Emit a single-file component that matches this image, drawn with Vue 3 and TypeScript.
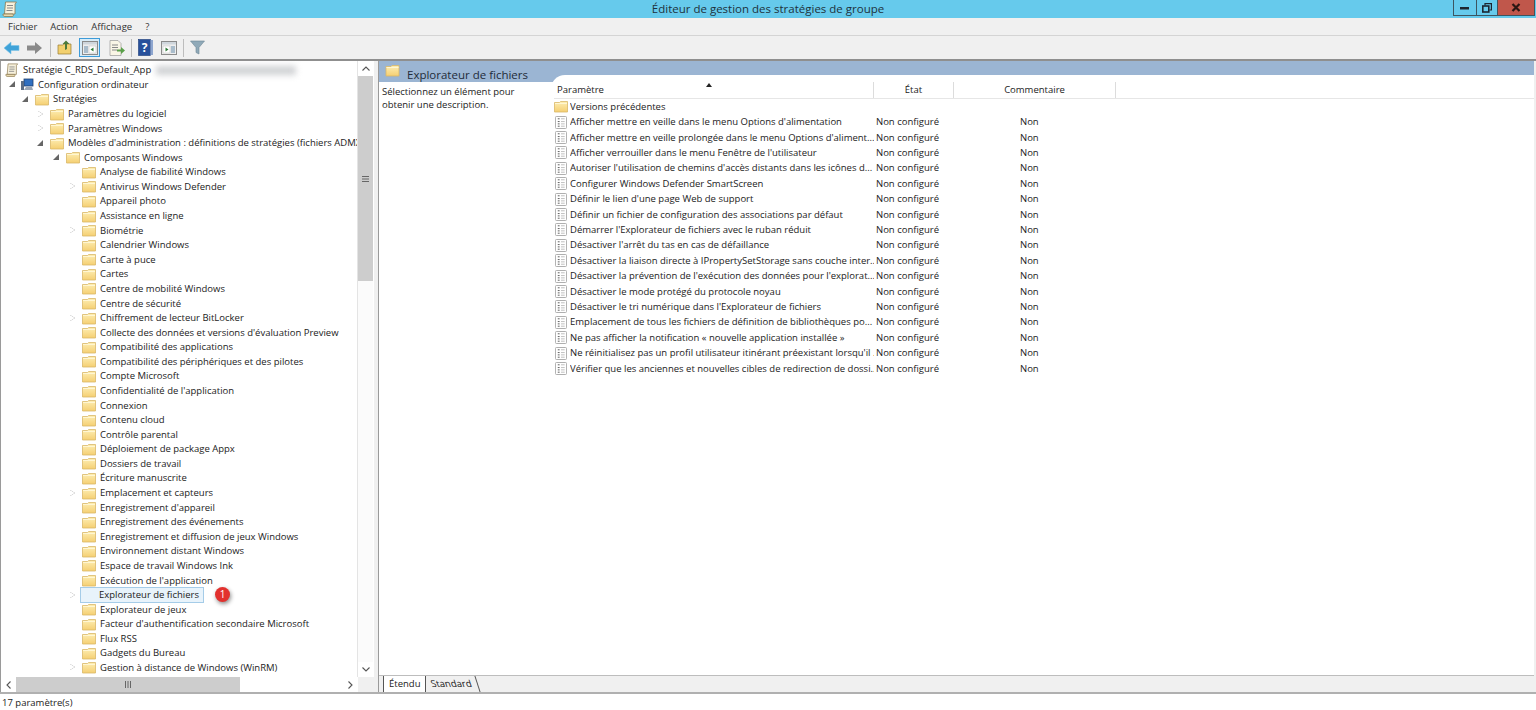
<script setup lang="ts">
interface TreeRow {
  label: string;
  level: number;
  icon: 'folder' | 'scroll' | 'computer';
  arrow?: 'open' | 'closed';
  selected?: boolean;
  blurred?: boolean;
}

// Composants Windows : niveau 5, tous des dossiers
const folder = (label: string, arrow?: 'closed'): TreeRow => ({label, level: 5, icon: 'folder', arrow});

const tree: TreeRow[] = [
  {label: 'Stratégie C_RDS_Default_App', level: 0, icon: 'scroll', blurred: true},
  {label: 'Configuration ordinateur', level: 1, icon: 'computer', arrow: 'open'},
  {label: 'Stratégies', level: 2, icon: 'folder', arrow: 'open'},
  {label: 'Paramètres du logiciel', level: 3, icon: 'folder', arrow: 'closed'},
  {label: 'Paramètres Windows', level: 3, icon: 'folder', arrow: 'closed'},
  {label: "Modèles d'administration : définitions de stratégies (fichiers ADMX)", level: 3, icon: 'folder', arrow: 'open'},
  {label: 'Composants Windows', level: 4, icon: 'folder', arrow: 'open'},
  folder('Analyse de fiabilité Windows'),
  folder('Antivirus Windows Defender', 'closed'),
  folder('Appareil photo'),
  folder('Assistance en ligne'),
  folder('Biométrie', 'closed'),
  folder('Calendrier Windows'),
  folder('Carte à puce'),
  folder('Cartes'),
  folder('Centre de mobilité Windows'),
  folder('Centre de sécurité'),
  folder('Chiffrement de lecteur BitLocker', 'closed'),
  folder("Collecte des données et versions d'évaluation Preview"),
  folder('Compatibilité des applications'),
  folder('Compatibilité des périphériques et des pilotes'),
  folder('Compte Microsoft'),
  folder("Confidentialité de l'application"),
  folder('Connexion'),
  folder('Contenu cloud'),
  folder('Contrôle parental'),
  folder('Déploiement de package Appx'),
  folder('Dossiers de travail'),
  folder('Écriture manuscrite'),
  folder('Emplacement et capteurs', 'closed'),
  folder("Enregistrement d'appareil"),
  folder('Enregistrement des événements'),
  folder('Enregistrement et diffusion de jeux Windows'),
  folder('Environnement distant Windows'),
  folder('Espace de travail Windows Ink'),
  folder("Exécution de l'application"),
  {label: 'Explorateur de fichiers', level: 5, icon: 'folder', arrow: 'closed', selected: true},
  folder('Explorateur de jeux'),
  folder("Facteur d'authentification secondaire Microsoft"),
  folder('Flux RSS'),
  folder('Gadgets du Bureau'),
  folder('Gestion à distance de Windows (WinRM)', 'closed'),
];

const settings = [
  "Afficher mettre en veille dans le menu Options d'alimentation",
  "Afficher mettre en veille prolongée dans le menu Options d'aliment...",
  "Afficher verrouiller dans le menu Fenêtre de l'utilisateur",
  "Autoriser l'utilisation de chemins d'accès distants dans les icônes d...",
  'Configurer Windows Defender SmartScreen',
  "Définir le lien d'une page Web de support",
  'Définir un fichier de configuration des associations par défaut',
  "Démarrer l'Explorateur de fichiers avec le ruban réduit",
  "Désactiver l'arrêt du tas en cas de défaillance",
  'Désactiver la liaison directe à IPropertySetStorage sans couche inter...',
  "Désactiver la prévention de l'exécution des données pour l'explorat...",
  'Désactiver le mode protégé du protocole noyau',
  "Désactiver le tri numérique dans l'Explorateur de fichiers",
  'Emplacement de tous les fichiers de définition de bibliothèques po...',
  'Ne pas afficher la notification « nouvelle application installée »',
  'Ne réinitialisez pas un profil utilisateur itinérant préexistant lorsqu\'il ...',
  'Vérifier que les anciennes et nouvelles cibles de redirection de dossi...',
];
</script>

<template>
  <div class="app">
    <svg class="defs" width="0" height="0">
      <defs>
        <linearGradient id="fold" x1="0" y1="0" x2="0" y2="1">
          <stop offset="0" stop-color="#fdeeb4"/>
          <stop offset="1" stop-color="#f5cf72"/>
        </linearGradient>
      </defs>
      <symbol id="i-folder" viewBox="0 0 14 13">
        <path d="M.5 2.5V12h13V1.5H6.5L5.5 2.5z" fill="url(#fold)" stroke="#d9b768" stroke-width=".8"/>
        <path d="M1 3.5h12" stroke="#fff6d2" stroke-width="1"/>
      </symbol>
      <symbol id="i-setting" viewBox="0 0 13 14">
        <rect x=".5" y=".5" width="12" height="13" rx="1" fill="#fff" stroke="#a8a8a8"/>
        <path d="M3 3h2M3 6h2M3 8.500h2M3 11h2" stroke="#555" stroke-width="1"/>
        <path d="M6.500 3h4M6.500 6h4M6.500 8.500h4M6.500 11h4" stroke="#bbb" stroke-width="1"/>
      </symbol>
      <symbol id="i-scroll" viewBox="0 0 16 16">
        <path d="M3.500 1h11l-1.500 2v10H2.500z" fill="#f7f1dc" stroke="#8c7a50" stroke-width=".8"/>
        <path d="M1 13h10c.6 1 .4 2-.2 2.500H2.500C1.500 15.500.8 14 1 13z" fill="#e8d9ae" stroke="#8c7a50" stroke-width=".8"/>
        <path d="M5 4.500h6M5 7h6M4.500 9.500h6" stroke="#8a8a8a"/>
      </symbol>
    </svg>

    <header class="titlebar">
      <svg class="titlebar__icon" width="16" height="16"><use href="#i-scroll"/></svg>
      <span class="titlebar__text">Éditeur de gestion des stratégies de groupe</span>
      <div class="winbtns">
        <div class="winbtn winbtn--min">
          <svg width="10" height="4" viewBox="0 0 10 4"><rect y="1" width="9" height="2.500" fill="#1c2530"/></svg>
        </div>
        <div class="winbtn winbtn--max">
          <svg width="10" height="10" viewBox="0 0 10 10">
            <path d="M3 2.500V.6h6.400v6.400H7.500" fill="none" stroke="#1c2530" stroke-width="1.200"/>
            <rect x=".8" y="3" width="6" height="6" fill="none" stroke="#1c2530" stroke-width="1.600"/>
          </svg>
        </div>
        <div class="winbtn winbtn--close">
          <svg width="10" height="9" viewBox="0 0 10 9"><path d="M1.500 1l7 7M8.500 1l-7 7" stroke="#2a1613" stroke-width="2.200"/></svg>
        </div>
      </div>
    </header>

    <nav class="menubar">
      <span>Fichier</span>
      <span>Action</span>
      <span>Affichage</span>
      <span>?</span>
    </nav>

    <div class="toolbar">
      <svg class="tool" width="18" height="14" viewBox="0 0 18 14"><path d="M1 7l7-6v3.500h8v5H8V13z" fill="#3fa2d8" stroke="#7cc4e8" stroke-width=".6"/></svg>
      <svg class="tool" width="18" height="14" viewBox="0 0 18 14"><path d="M17 7l-7-6v3.500H2v5h8V13z" fill="#8a8a8a"/></svg>
      <i class="sep"></i>
      <svg class="tool" width="16" height="16" viewBox="0 0 16 16">
        <path d="M1 5h5l1-1h7v10H1z" fill="#f2d06f" stroke="#9a7d33" stroke-width=".7"/>
        <path d="M8 10V4H5.500L9 .5 12.500 4H10v5z" fill="#4c7a3a"/>
      </svg>
      <div class="tool-active">
        <svg width="16" height="14" viewBox="0 0 16 14">
          <rect x=".5" y=".5" width="15" height="13" fill="#eee" stroke="#8b8b8b"/>
          <rect x="1" y="1" width="14" height="2.500" fill="#cfd6dc"/>
          <rect x="2" y="5" width="4" height="7" fill="#a9bccb"/>
          <rect x="7" y="5" width="7" height="7" fill="#fff" stroke="#bbb" stroke-width=".5"/>
          <path d="M11.500 6.500l-3 2 3 2z" fill="#2d7a36"/>
        </svg>
      </div>
      <svg class="tool tool--doc" width="18" height="16" viewBox="0 0 18 16">
        <path d="M2 .5h8l3 3v12H2z" fill="#faf6e6" stroke="#999" stroke-width=".7"/>
        <path d="M4 5h6M4 7.500h6M4 10h5" stroke="#888"/>
        <path d="M9 9.500h4V7l4 3.500-4 3.500v-2.500H9z" fill="#5aa04a"/>
      </svg>
      <i class="sep"></i>
      <svg class="tool" width="16" height="17" viewBox="0 0 16 17">
        <rect x=".5" y=".5" width="12" height="16" fill="#27509b" stroke="#1a3a78" stroke-width=".6"/>
        <rect x="12.500" y="1" width="2.500" height="15" fill="#8ea6cf"/>
        <text x="6.500" y="13" class="help-mark">?</text>
      </svg>
      <svg class="tool tool--pane" width="16" height="14" viewBox="0 0 16 14">
        <rect x=".5" y=".5" width="15" height="13" fill="#eee" stroke="#8b8b8b"/>
        <rect x="1" y="1" width="14" height="2.500" fill="#cfd6dc"/>
        <rect x="2" y="5" width="7" height="7" fill="#fff" stroke="#bbb" stroke-width=".5"/>
        <rect x="10" y="5" width="4" height="7" fill="#a9bccb"/>
        <path d="M4.500 6.500l3 2-3 2z" fill="#2d7a36"/>
      </svg>
      <i class="sep"></i>
      <svg class="tool" width="15" height="15" viewBox="0 0 15 15">
        <path d="M.5 1h14L9 7.500V14l-3-1.500v-5z" fill="#8fa9b8" stroke="#6d8796" stroke-width=".6"/>
      </svg>
    </div>

    <main class="panes">
      <section class="left">
        <div class="left__top">
          <div class="tree">
            <div v-for="row in tree" :key="row.label" class="tree__row" :class="'lvl-' + row.level">
              <span class="tree__arrow" :class="row.arrow ? 'tree__arrow--' + row.arrow : ''"></span>
              <svg v-if="row.icon === 'folder'" class="tree__icon" width="14" height="13"><use href="#i-folder"/></svg>
              <svg v-else-if="row.icon === 'scroll'" class="tree__icon" width="14" height="14"><use href="#i-scroll"/></svg>
              <svg v-else class="tree__icon" width="14" height="13" viewBox="0 0 14 13">
                <rect x="4" y="1" width="9" height="7" fill="#2f6fc0" stroke="#20406e" stroke-width=".8"/>
                <path d="M1 3h3v9H1z" fill="#5c6d84"/>
                <path d="M4 12l2-3h6l1 3z" fill="#9aa6b5"/>
              </svg>
              <span class="tree__label" :class="{'tree__label--sel': row.selected}">{{ row.label }}</span>
              <span v-if="row.blurred" class="tree__blur"></span>
              <span v-if="row.selected" class="badge">1</span>
            </div>
          </div>
          <div class="vscroll">
            <div class="sbtn">
              <svg width="8" height="5" viewBox="0 0 8 5"><path d="M.5 4.500L4 1l3.500 3.500" fill="none" stroke="#555" stroke-width="1.100"/></svg>
            </div>
            <div class="vscroll__thumb">
              <svg width="7" height="6" viewBox="0 0 7 6"><path d="M0 .5h7M0 3h7M0 5.500h7" stroke="#666"/></svg>
            </div>
            <div class="vscroll__track"></div>
            <div class="sbtn">
              <svg width="8" height="5" viewBox="0 0 8 5"><path d="M.5.500L4 4 7.500.500" fill="none" stroke="#555" stroke-width="1.100"/></svg>
            </div>
          </div>
        </div>
        <div class="hscroll">
          <div class="sbtn sbtn--h">
            <svg width="5" height="8" viewBox="0 0 5 8"><path d="M4.500.500L1 4l3.500 3.500" fill="none" stroke="#555" stroke-width="1.100"/></svg>
          </div>
          <div class="hscroll__thumb">
            <svg width="6" height="7" viewBox="0 0 6 7"><path d="M.5 0v7M3 0v7M5.500 0v7" stroke="#666"/></svg>
          </div>
          <div class="hscroll__track"></div>
          <div class="sbtn sbtn--h">
            <svg width="5" height="8" viewBox="0 0 5 8"><path d="M.5.500L4 4 .5 7.500" fill="none" stroke="#555" stroke-width="1.100"/></svg>
          </div>
          <div class="hscroll__corner"></div>
        </div>
      </section>

      <div class="splitter"></div>

      <section class="right">
        <div class="right__frame">
          <div class="band">
            <svg class="band__icon" width="15" height="13"><use href="#i-folder"/></svg>
            <span class="band__title">Explorateur de fichiers</span>
          </div>
          <div class="content">
            <p class="descr">Sélectionnez un élément pour obtenir une description.</p>
            <div class="list">
              <div class="list__head">
                <div class="col col--name">Paramètre<i class="sort"></i></div>
                <div class="col col--state">État</div>
                <div class="col col--comment">Commentaire</div>
              </div>
              <div class="list__row">
                <svg class="list__icon list__icon--folder" width="14" height="13"><use href="#i-folder"/></svg>
                <span class="cell-name">Versions précédentes</span>
              </div>
              <div v-for="s in settings" :key="s" class="list__row">
                <svg class="list__icon" width="12" height="13"><use href="#i-setting"/></svg>
                <span class="cell-name">{{ s }}</span>
                <span class="cell-state">Non configuré</span>
                <span class="cell-comment">Non</span>
              </div>
            </div>
          </div>
        </div>
        <div class="tabs">
          <span class="tab tab--on">Étendu</span>
          <span class="tab">Standard</span>
        </div>
      </section>
    </main>

    <footer class="status">17 paramètre(s)</footer>
  </div>
</template>

<style scoped>
.app {
  width: 1536px;
  height: 710px;
  display: flex;
  flex-direction: column;
  overflow: hidden;
  background: #f0f0f0;
  color: #222;
  font-family: "Open Sans", "Noto Sans", sans-serif;
  font-size: 9.5px;
  line-height: 14px;
}

.defs {
  position: absolute;
}

.titlebar {
  height: 18px;
  flex: none;
  display: flex;
  align-items: flex-start;
  position: relative;
  background: #66caec;
}

.titlebar__icon {
  margin: 1px 0 0 2px;
}

.titlebar__text {
  position: absolute;
  left: 0;
  right: 0;
  top: 2px;
  text-align: center;
  font-size: 11.5px;
  color: #20323c;
}

.winbtns {
  margin-left: auto;
  margin-right: 1px;
  display: flex;
  height: 16px;
  position: relative;
}

.winbtn {
  height: 16px;
  display: flex;
  align-items: center;
  justify-content: center;
  box-sizing: border-box;
  border-bottom: 1px solid #3d5560;
  border-right: 1px solid #3d5560;
}

.winbtn--min {
  width: 24px;
  border-left: 1px solid #3d5560;
}

.winbtn--max {
  width: 21px;
}

.winbtn--close {
  width: 37px;
  background: #c0574b;
}

.menubar {
  height: 18px;
  flex: none;
  display: flex;
  align-items: center;
  gap: 13px;
  padding-left: 8px;
  box-sizing: border-box;
  border-bottom: 1px solid #d4d4d4;
  font-size: 9.5px;
  color: #333;
}

.toolbar {
  height: 25px;
  flex: none;
  display: flex;
  align-items: center;
  padding-left: 3px;
  box-sizing: border-box;
  border-bottom: 2px solid #8f8f8f;
}

.tool {
  margin-right: 4px;
  flex: none;
}

.tool--doc {
  margin-left: 8px;
  margin-right: 2px;
}

.tool--pane {
  margin-left: 3px;
  margin-right: 3px;
}

.help-mark {
  fill: #fff;
  font-size: 12px;
  font-weight: 700;
  text-anchor: middle;
}

.tool-active {
  width: 19px;
  height: 17px;
  flex: none;
  display: flex;
  align-items: center;
  justify-content: center;
  margin-left: 2px;
  background: #d8ecf8;
  border: 1px solid #3d9bd8;
}

.sep {
  width: 1px;
  height: 18px;
  flex: none;
  margin: 0 6px 0 3px;
  background: #bdbdbd;
}

.panes {
  flex: 1;
  display: flex;
  min-height: 0;
}

.left {
  width: 374px;
  flex: none;
  display: flex;
  flex-direction: column;
  box-sizing: border-box;
  border-left: 1px solid #9a9a9a;
  background: #fff;
}

.left__top {
  flex: 1;
  display: flex;
  min-height: 0;
}

.tree {
  flex: 1;
  padding-top: 2px;
  overflow: hidden;
}

.tree__row {
  height: 14.585px;
  display: flex;
  align-items: center;
  position: relative;
  white-space: nowrap;
}

.lvl-0 { padding-left: 4px; }
.lvl-1 { padding-left: 4px; }
.lvl-2 { padding-left: 19px; }
.lvl-3 { padding-left: 34px; }
.lvl-4 { padding-left: 50px; }
.lvl-5 { padding-left: 66px; }

.tree__arrow {
  width: 12px;
  height: 9px;
  flex: none;
  position: relative;
  margin-right: 3px;
}

.lvl-0 .tree__arrow {
  display: none;
}

.lvl-1 .tree__arrow {
  width: 11px;
  margin-right: 2px;
  margin-left: 2px;
}

.tree__arrow--closed::before {
  content: "";
  position: absolute;
  left: 3px;
  top: 1px;
  border-left: 5px solid #fff;
  border-top: 3.500px solid transparent;
  border-bottom: 3.500px solid transparent;
  filter: drop-shadow(0 0 .6px #666);
}

.tree__arrow--open::before {
  content: "";
  position: absolute;
  left: 2px;
  top: 1px;
  width: 0;
  height: 0;
  border-bottom: 6px solid #666;
  border-left: 6px solid transparent;
}

.tree__icon {
  flex: none;
  margin-right: 3px;
}

.tree__label {
  padding: 0 2px 0 1px;
  box-sizing: border-box;
}

.tree__label--sel {
  outline: 1px solid #a5cce8;
  background: #e8f3fb;
  margin-left: -18px;
  padding-left: 18px;
  padding-right: 4px;
  height: 14px;
  position: relative;
  z-index: 0;
}

.tree__blur {
  width: 140px;
  height: 9px;
  margin-left: 3px;
  background: #c4c6c9;
  filter: blur(3px);
  opacity: .8;
}

.badge {
  position: absolute;
  left: 214px;
  top: -1px;
  width: 15px;
  height: 15px;
  border-radius: 50%;
  background: #e2312e;
  color: #fff;
  font-size: 10px;
  line-height: 15px;
  text-align: center;
  box-shadow: 1px 2px 4px rgba(0, 0, 0, .45);
}

.vscroll {
  width: 15px;
  flex: none;
  margin-right: 1px;
  display: flex;
  flex-direction: column;
  background: #fff;
  border-left: 1px solid #e4e4e4;
  box-sizing: content-box;
}

.sbtn {
  height: 15px;
  flex: none;
  display: flex;
  align-items: center;
  justify-content: center;
  background: #fff;
}

.sbtn--h {
  width: 15px;
}

.vscroll__thumb {
  height: 205px;
  flex: none;
  display: flex;
  align-items: center;
  justify-content: center;
  background: #cdcdcd;
}

.vscroll__track {
  flex: 1;
  background: #fbfbfb;
}

.hscroll {
  height: 15px;
  flex: none;
  display: flex;
  background: #fff;
}

.hscroll__thumb {
  width: 224px;
  flex: none;
  display: flex;
  align-items: center;
  justify-content: center;
  background: #cdcdcd;
}

.hscroll__track {
  flex: 1;
}

.hscroll__corner {
  width: 16px;
  flex: none;
  background: #f0f0f0;
}

.splitter {
  width: 4px;
  flex: none;
  background: #f0f0f0;
}

.right {
  flex: 1;
  min-width: 0;
  display: flex;
  flex-direction: column;
  border-left: 1px solid #9a9a9a;
  margin-right: 2px;
}

.right__frame {
  flex: 1;
  min-height: 0;
  display: flex;
  flex-direction: column;
  background: #fff;
}

.band {
  height: 21px;
  flex: none;
  display: flex;
  align-items: flex-start;
  background: #9bb5d3;
  padding-left: 6px;
}

.band__icon {
  margin-top: 3px;
}

.band__title {
  margin: 6px 0 0 7px;
  font-size: 11.500px;
  line-height: 15px;
  color: #1f2c3a;
}

.content {
  flex: 1;
  min-height: 0;
  display: flex;
}

.descr {
  width: 163px;
  flex: none;
  margin: 4px 0 0 3px;
  line-height: 12.500px;
  color: #222;
}

.list {
  flex: 1;
  position: relative;
  z-index: 0;
  margin-top: -7px;
  margin-left: 6px;
  padding-left: 3px;
  background: #fff;
  border-top-left-radius: 14px;
}

.list__head {
  display: flex;
  height: 16px;
  margin-top: 7px;
  margin-left: 0;
  border-bottom: 1px solid #e6e6e6;
  margin-bottom: 0;
}

.col {
  box-sizing: border-box;
  height: 16px;
  border-right: 1px solid #dcdcdc;
  line-height: 15px;
  text-align: center;
  position: relative;
}

.col--name {
  width: 320px;
  text-align: left;
  padding-left: 3px;
}

.col--state {
  width: 80px;
}

.col--comment {
  width: 162px;
}

.sort {
  position: absolute;
  left: 152px;
  top: 1px;
  border-bottom: 4px solid #222;
  border-left: 3.500px solid transparent;
  border-right: 3.500px solid transparent;
}

.list__row {
  height: 15.410px;
  display: flex;
  align-items: center;
  white-space: nowrap;
  position: relative;
}

.list__icon {
  flex: none;
  margin-left: 1px;
  margin-right: 3px;
}

.list__icon--folder {
  margin-left: 0;
  margin-right: 2px;
}

.cell-name {
  width: 304px;
  flex: none;
  overflow: hidden;
}

.cell-state {
  width: 144px;
  flex: none;
  margin-left: 2px;
}

.tabs {
  height: 16px;
  flex: none;
  display: flex;
  align-items: stretch;
  padding-left: 4px;
  border-top: 1px solid #bdbdbd;
  background: #f0f0f0;
}

.tab {
  padding: 0 5px;
  line-height: 15px;
  border-right: 1px solid #555;
  transform: skewX(18deg);
}

.tab--on {
  background: #fff;
  border-left: 1px solid #555;
  border-right: 1px solid #555;
  transform: none;
}

.status {
  height: 18px;
  flex: none;
  box-sizing: border-box;
  padding-left: 2px;
  line-height: 17px;
  background: #fff;
  border-top: 2px solid #b0b0b0;
}
</style>
